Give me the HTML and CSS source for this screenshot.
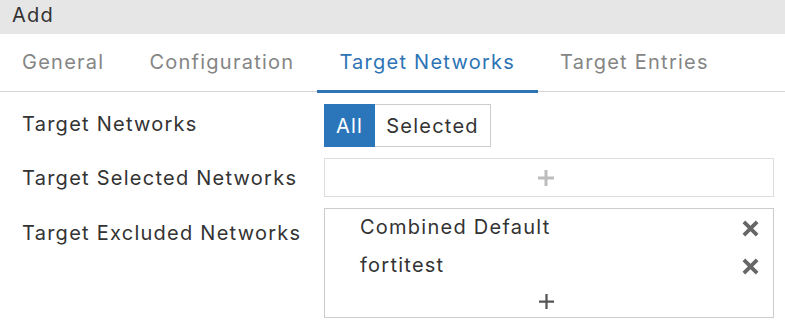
FILE: index.html
```html
<!DOCTYPE html>
<html>
<head>
<meta charset="utf-8">
<link rel="stylesheet" href="styles.css">
</head>
<body>
<div class="header">Add</div>
<div class="tabs">
  <div class="tab">General</div>
  <div class="tab">Configuration</div>
  <div class="tab active">Target Networks</div>
  <div class="tab">Target Entries</div>
</div>
<div class="form">
  <div class="row">
    <div class="label l1">Target Networks</div>
    <div class="seg">
      <span class="seg-btn on">All</span><span class="seg-btn">Selected</span>
    </div>
  </div>
  <div class="row">
    <div class="label l2">Target Selected Networks</div>
    <div class="box empty">
      <svg class="plus light" width="16" height="16" viewBox="0 0 16 16"><path d="M6.5 0h3v6.5H16v3H9.5V16h-3V9.5H0v-3h6.5z"/></svg>
    </div>
  </div>
  <div class="row">
    <div class="label l3">Target Excluded Networks</div>
    <div class="box list">
      <div class="item"><span>Combined Default</span>
        <svg class="x" width="17" height="17" viewBox="0 0 16 16"><path d="M0.5 3L3 0.5 8 5.5 13 0.5 15.5 3 10.5 8 15.5 13 13 15.5 8 10.5 3 15.5 0.5 13 5.5 8z"/></svg>
      </div>
      <div class="item"><span>fortitest</span>
        <svg class="x" width="17" height="17" viewBox="0 0 16 16"><path d="M0.5 3L3 0.5 8 5.5 13 0.5 15.5 3 10.5 8 15.5 13 13 15.5 8 10.5 3 15.5 0.5 13 5.5 8z"/></svg>
      </div>
      <div class="add">
        <svg class="plus dark" width="15" height="15" viewBox="0 0 16 16"><path d="M6.8 0h2.4v6.8H16v2.4H9.2V16H6.8V9.2H0V6.8h6.8z"/></svg>
      </div>
    </div>
  </div>
</div>
</body>
</html>
```
FILE: styles.css
```css
html, body {
  margin: 0;
  padding: 0;
  background: #fff;
  font-family: Inter, "Noto Sans", sans-serif;
  font-size: 20px;
  letter-spacing: 1.25px;
  color: #333;
}
.header {
  height: 34px;
  background: #e6e6e6;
  padding-left: 12px;
  line-height: 31px;
  color: #333;
  box-sizing: border-box;
}
.tabs {
  display: flex;
  height: 58px;
  border-bottom: 1px solid #d6d6d6;
  box-sizing: border-box;
}
.tab {
  padding: 0 23px 0 22px;
  color: #858585;
  line-height: 56px;
  border-bottom: 3px solid transparent;
  margin-bottom: -2px;
}
.tab.active {
  color: #2e74b5;
  border-bottom-color: #2e74b5;
}
.form {
  padding: 12px 0 0 0;
  display: flex;
  flex-direction: column;
  gap: 11px;
}
.row {
  display: flex;
  align-items: flex-start;
}
.label {
  width: 302px;
  padding-left: 22px;
  flex: none;
}
.l1 { padding-top: 8px; }
.l2 { padding-top: 8px; }
.l3 { padding-top: 13px; }
.seg {
  display: flex;
  height: 43px;
}
.seg-btn {
  display: flex;
  align-items: center;
  border: 1px solid #ccc;
  color: #333;
  box-sizing: border-box;
  height: 43px;
}
.seg-btn.on {
  background: #2b76bb;
  border-color: #2b76bb;
  color: #fff;
  width: 51px;
  justify-content: center;
}
.seg-btn + .seg-btn {
  border-left: none;
  width: 116px;
  justify-content: center;
}
.box {
  width: 450px;
  box-sizing: border-box;
  border: 1px solid #ddd;
}
.box.empty {
  height: 39px;
  display: flex;
  align-items: center;
  justify-content: center;
}
.plus.light { fill: #bdbdbd; margin-left: -6px; }
.plus.dark { fill: #555; margin-left: -6px; }
.box.list {
  height: 110px;
  border-color: #ccc;
}
.item {
  height: 38px;
  display: flex;
  align-items: center;
  justify-content: space-between;
  padding: 0 14px 0 35px;
}
.item span { line-height: 38px; margin-top: -2px; }
.x { fill: #666; }
.add {
  height: 32px;
  display: flex;
  align-items: center;
  justify-content: center;
}
```
